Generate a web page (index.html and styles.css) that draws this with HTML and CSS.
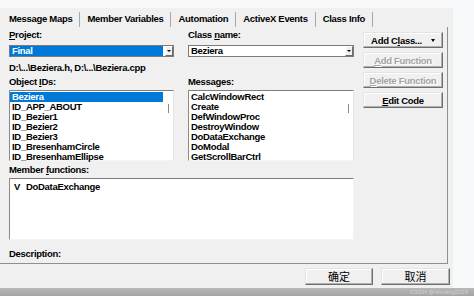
FILE: index.html
```html
<!DOCTYPE html>
<html lang="en">
<head>
  <meta charset="UTF-8">
  <title>ClassWizard</title>
  <link rel="stylesheet" href="styles.css">
</head>
<body>
  <div class="window">
    <div class="tabs">
      <span class="tab">Message Maps</span>
      <span class="tab">Member Variables</span>
      <span class="tab">Automation</span>
      <span class="tab">ActiveX Events</span>
      <span class="tab">Class Info</span>
    </div>

    <div class="pane">
      <div class="fields">
        <div class="label"><u>P</u>roject:</div>
        <div class="label">Class <u>n</u>ame:</div>

        <div class="combo combo-focus">
          <div class="combo-text">Final</div>
          <div class="combo-btn"><i class="arrow"></i></div>
        </div>
        <div class="combo">
          <div class="combo-text">Beziera</div>
          <div class="combo-btn"><i class="arrow"></i></div>
        </div>

        <div class="path">D:\...\Beziera.h, D:\...\Beziera.cpp</div>

        <div class="label label-tight">Object <u>I</u>Ds:</div>
        <div class="label label-tight">Messages:</div>

        <div class="list">
          <div class="list-items">
            <div class="item selected">Beziera</div>
            <div class="item">ID_APP_ABOUT</div>
            <div class="item">ID_Bezier1</div>
            <div class="item">ID_Bezier2</div>
            <div class="item">ID_Bezier3</div>
            <div class="item">ID_BresenhamCircle</div>
            <div class="item">ID_BresenhamEllipse</div>
          </div>
          <div class="scroll"><i class="thumb"></i></div>
        </div>
        <div class="list">
          <div class="list-items">
            <div class="item">CalcWindowRect</div>
            <div class="item">Create</div>
            <div class="item">DefWindowProc</div>
            <div class="item">DestroyWindow</div>
            <div class="item">DoDataExchange</div>
            <div class="item">DoModal</div>
            <div class="item">GetScrollBarCtrl</div>
          </div>
          <div class="scroll"><i class="thumb"></i></div>
        </div>

        <div class="label label-members">Member <u>f</u>unctions:</div>
        <div class="members">
          <div class="member"><span class="flag">V</span>DoDataExchange</div>
        </div>

        <div class="label label-desc">Description:</div>
      </div>

      <div class="buttons">
        <button class="btn btn-menu"><span>Add C<u>l</u>ass...</span><i class="arrow"></i></button>
        <button class="btn" disabled><u>A</u>dd Function</button>
        <button class="btn" disabled><u>D</u>elete Function</button>
        <button class="btn"><u>E</u>dit Code</button>
      </div>
    </div>

    <div class="footer">
      <button class="btn btn-cjk btn-ok">确定</button>
      <button class="btn btn-cjk btn-cancel">取消</button>
    </div>
  </div>

  <div class="taskbar"><span class="mark">CSDN @shuang0129</span></div>
</body>
</html>
```

FILE: styles.css
```css
body {
  margin: 0;
  background: #f8f9fa;
  font-family: "Liberation Sans", Arial, sans-serif;
  font-size: 9.5px;
  font-weight: bold;
  letter-spacing: -0.3px;
  color: #000;
  overflow: hidden;
}
.window {
  margin-top: 8px;
  width: 453px;
  height: 280px;
  background: #f0f0f0;
}
.tabs {
  height: 19px;
  box-sizing: border-box;
  padding: 4px 0 0 2px;
  display: flex;
}
.tab {
  line-height: 13px;
  padding: 0 7px;
  border-right: 1px solid #a8a8a8;
}
.pane {
  display: flex;
  width: 448px;
  height: 237px;
  box-sizing: border-box;
  padding: 2px 0 0 9px;
  border-right: 1px solid #8f8f8f;
  border-bottom: 1px solid #8f8f8f;
}
.fields {
  display: grid;
  grid-template-columns: 165px 166px;
  column-gap: 14px;
  align-content: start;
}
.label {
  height: 12px;
  line-height: 12px;
}
.label-tight {
  margin-top: 2px;
}
.label-members {
  grid-column: 1 / -1;
  margin-top: 3px;
}
.label-desc {
  grid-column: 1 / -1;
  margin-top: 8px;
}
.combo {
  margin-top: 4px;
  height: 12px;
  box-sizing: border-box;
  display: flex;
  background: #fff;
  border: 1px solid #7a7a7a;
}
.combo-text {
  flex: 1;
  line-height: 10px;
  padding-left: 2px;
}
.combo-focus .combo-text {
  background: #0078d7;
  color: #fff;
  margin-right: 2px;
}
.combo-btn {
  width: 8px;
  box-sizing: border-box;
  display: flex;
  align-items: center;
  justify-content: center;
  background: #f0f0f0;
  border: 1px solid;
  border-color: #fff #6d6d6d #6d6d6d #fff;
}
.arrow {
  display: inline-block;
  border-left: 2px solid transparent;
  border-right: 2px solid transparent;
  border-top: 2px solid #000;
}
.path {
  grid-column: 1 / -1;
  margin-top: 5px;
  height: 12px;
  line-height: 12px;
}
.list {
  margin-top: 2px;
  height: 71px;
  box-sizing: border-box;
  display: flex;
  background: #fff;
  border: 1px solid;
  border-color: #7d7d7d #e6e6e6 #f4f4f4 #8a8a8a;
  padding-top: 1px;
}
.list-items {
  flex: 1;
}
.item {
  height: 10px;
  line-height: 10px;
  padding-left: 2px;
  white-space: nowrap;
}
.selected {
  background: #0078d7;
  color: #fff;
}
.scroll {
  width: 10px;
  display: flex;
  justify-content: center;
}
.thumb {
  display: block;
  margin-top: 12px;
  width: 1px;
  height: 9px;
  background: #8a8a8a;
}
.members {
  grid-column: 1 / -1;
  margin-top: 2px;
  height: 62px;
  box-sizing: border-box;
  background: #fff;
  border: 1px solid;
  border-color: #7d7d7d #f4f4f4 #f4f4f4 #8a8a8a;
  padding: 3px 0 0 4px;
}
.member {
  line-height: 10px;
}
.flag {
  display: inline-block;
  width: 12px;
}
.buttons {
  margin: 3px 0 0 9px;
  display: flex;
  flex-direction: column;
  gap: 4px;
}
.btn {
  width: 80px;
  height: 16px;
  padding: 0;
  font: inherit;
  letter-spacing: inherit;
  color: #000;
  background: #f0f0f0;
  border: 1px solid;
  border-color: #e3e3e3 #6d6d6d #6d6d6d #e3e3e3;
  box-shadow: inset -1px -1px #b0b0b0, inset 1px 1px #fff;
}
.btn:disabled {
  color: #a3a3a3;
  text-shadow: 1px 1px #fff;
}
.btn-menu {
  display: flex;
  align-items: center;
  justify-content: center;
  gap: 9px;
  white-space: nowrap;
}
.btn-menu .arrow {
  border-left-width: 2.5px;
  border-right-width: 2.5px;
  border-top-width: 3px;
}
.footer {
  height: 24px;
  box-sizing: border-box;
  padding: 4px 0 0 305px;
  display: flex;
  gap: 8px;
}
.btn-cjk {
  height: 17px;
  font-family: "Noto Sans CJK SC", sans-serif;
  font-weight: normal;
  font-size: 11px;
  letter-spacing: 0;
  line-height: 15px;
}
.btn-ok {
  width: 68px;
}
.btn-cancel {
  width: 69px;
}
.taskbar {
  height: 8px;
  background: linear-gradient(#b8b8b8, #a4a4a4);
  display: flex;
  justify-content: flex-end;
  padding-right: 6px;
}
.mark {
  font-family: "Liberation Sans", Arial, sans-serif;
  font-weight: normal;
  font-size: 6px;
  letter-spacing: 0;
  line-height: 8px;
  color: #d0d0d0;
}
```
